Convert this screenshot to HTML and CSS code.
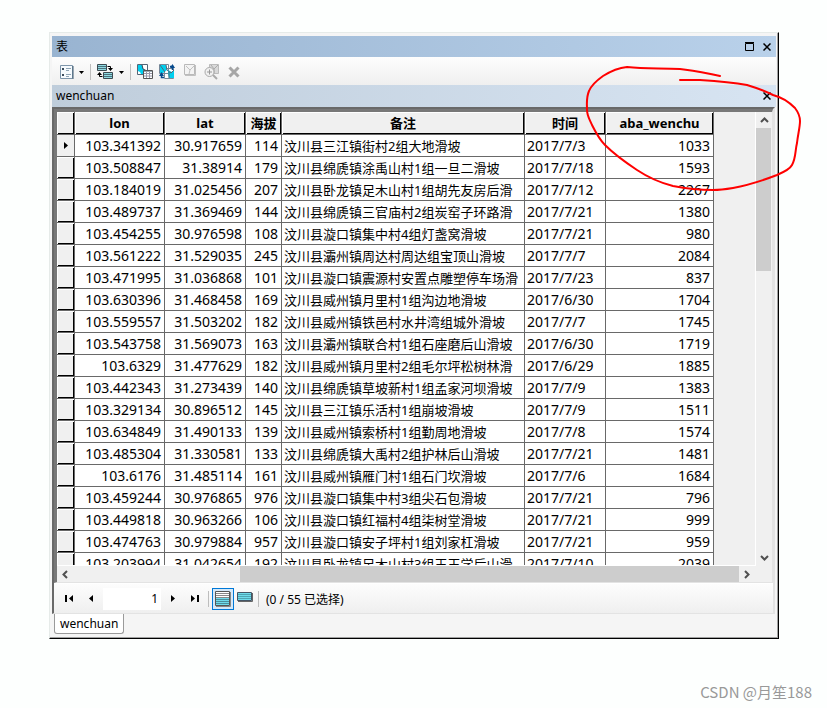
FILE: index.html
```html
<!DOCTYPE html>
<html lang="zh-CN">
<head>
	<meta charset="utf-8">
	<meta name="viewport" content="width=device-width, initial-scale=1">
	<title>表</title>
	<link rel="stylesheet" href="styles.css">
</head>

<body>
	<main class="window">
		<header class="titlebar">
			<h1 class="title">表</h1>
			<button class="win-btn" aria-label="最大化">
				<svg width="10" height="10" viewBox="0 0 10 10"><path d="M.5 1.500h8v7h-8zM0 .5h9" fill="none" stroke="#000"/></svg>
			</button>
			<button class="win-btn" aria-label="关闭">
				<svg width="8" height="8" viewBox="0 0 8 8"><path d="M.5 .5l7 7M7.500 .5l-7 7" stroke="#000" stroke-width="1.500"/></svg>
			</button>
		</header>

		<div class="toolbar">
			<button class="tool" aria-label="表选项">
				<svg width="14" height="14" viewBox="0 0 14 14"><path d="M.5 .5h12v13H.5z" fill="#f6fafd" stroke="#7d95aa"/><path d="M13 1v13" stroke="#3f586e"/><path d="M2 3h2v2H2zM2 9h2v2H2z" fill="#3b4d5c"/><path d="M6 3.500h5M6 5.500h3M6 9.500h5M6 11.500h3" stroke="#8fa5b5"/></svg>
				<svg width="5" height="3" viewBox="0 0 5 3"><path d="M0 0h5L2.500 3z"/></svg>
			</button>
			<span class="sep"></span>
			<button class="tool" aria-label="关联表">
				<svg width="17" height="16" viewBox="0 0 17 16"><path d="M.5 .5h9v6h-9zM6.500 8.500h9v6h-9z" fill="#8edbe2" stroke="#3c4a52"/><path d="M1 2.500h8M1 4.500h8M7 10.500h8M7 12.500h8" stroke="#4c707c"/><path d="M10.500 2.500h3V5M5.500 12.500h-3V10" fill="none" stroke="#000"/><path d="M11 4h5l-2.500 3zM0 11h5l-2.500-3z"/></svg>
				<svg width="5" height="3" viewBox="0 0 5 3"><path d="M0 0h5L2.500 3z"/></svg>
			</button>
			<span class="sep"></span>
			<button class="tool" aria-label="按属性选择">
				<svg width="17" height="16" viewBox="0 0 17 16"><path d="M.5 .5h10v10H.5z" fill="#fff" stroke="#567"/><path d="M1 1h4l1 4 4 2v3H4L3 8 1 7z" fill="#00cfee"/><path d="M5 1l1 4 4 2" fill="none" stroke="#345"/><path d="M6.500 6.500h9v8h-9z" fill="#fff" stroke="#555"/><path d="M7 7h8v1H7z" fill="#9aa8b2"/><path d="M7 9.500h8M7 12h8M9.500 8v6M12.500 8v6" stroke="#99a"/></svg>
			</button>
			<button class="tool" aria-label="切换选择">
				<svg width="17" height="16" viewBox="0 0 17 16"><path d="M.5 .5h9v9h-9zM5.500 4.500h9v10h-9z" fill="#fff" stroke="#789"/><path d="M1 1h6l1 5-4 3H1zM9 6l4 2 2-2v8h-5l-1-4z" fill="#00cfee"/><path d="M7 1l1 5 4 3 3-3M10 8v6M1 1l5 7" fill="none" stroke="#567"/><path d="M13.500 6V2.500H11M2.500 10v3.500H5" fill="none" stroke="#064a8c" stroke-width="1.500"/><path d="M11 4h5l-2.500-4zM0 12h5l-2.500-4z" fill="#064a8c"/></svg>
			</button>
			<button class="tool raised" aria-label="清除选择" disabled>
				<svg width="12" height="12" viewBox="0 0 12 12"><path d="M.5 .5h10v10H.5z" fill="#f3f3f3" stroke="#b9b9b9"/><path d="M2 2l4 4 4-4M6 6l-1 4M11.500 1v10.500H1" fill="none" stroke="#c0c0c0"/></svg>
			</button>
			<button class="tool" aria-label="缩放至所选项" disabled>
				<svg width="16" height="16" viewBox="0 0 16 16"><path d="M5.500 .5h9v9h-9z" fill="#d9d9d9" stroke="#bbb"/><path d="M7 1l3 4 4-4M10 5v4" fill="none" stroke="#aaa"/><circle cx="5.500" cy="8" r="4.500" fill="#f1f1f1" stroke="#aaa"/><path d="M3 8h5M5.500 5.500v5" stroke="#999"/><path d="M9 11l4 4" stroke="#aaa" stroke-width="2"/></svg>
			</button>
			<button class="tool" aria-label="删除所选项" disabled>
				<svg width="12" height="12" viewBox="0 0 12 12"><path d="M1.500 1.500l9 9M10.500 1.500l-9 9" stroke="#a6a6a6" stroke-width="3"/></svg>
			</button>
		</div>

		<div class="caption">
			<h2 class="title">wenchuan</h2>
			<button class="win-btn" aria-label="关闭 wenchuan">
				<svg width="8" height="8" viewBox="0 0 8 8"><path d="M.5 .5l7 7M7.500 .5l-7 7" stroke="#000" stroke-width="1.500"/></svg>
			</button>
		</div>

		<section class="pane">
			<div class="grid">
				<div class="rows">
					<table class="table">
						<colgroup>
							<col class="c-mark"><col class="c-lon"><col class="c-lat"><col class="c-alt"><col class="c-note"><col class="c-date"><col class="c-aba">
						</colgroup>
						<thead>
							<tr><th></th><th>lon</th><th>lat</th><th>海拔</th><th>备注</th><th>时间</th><th>aba_wenchu</th></tr>
						</thead>
						<tbody>
							<tr class="current"><th><svg width="4" height="7" viewBox="0 0 4 7"><path d="M0 0l4 3.500L0 7z"/></svg></th><td>103.341392</td><td>30.917659</td><td>114</td><td>汶川县三江镇街村2组大地滑坡</td><td>2017/7/3</td><td>1033</td></tr>
							<tr><th></th><td>103.508847</td><td>31.38914</td><td>179</td><td>汶川县绵虒镇涂禹山村1组一旦二滑坡</td><td>2017/7/18</td><td>1593</td></tr>
							<tr><th></th><td>103.184019</td><td>31.025456</td><td>207</td><td>汶川县卧龙镇足木山村1组胡先友房后滑</td><td>2017/7/12</td><td>2267</td></tr>
							<tr><th></th><td>103.489737</td><td>31.369469</td><td>144</td><td>汶川县绵虒镇三官庙村2组炭窑子环路滑</td><td>2017/7/21</td><td>1380</td></tr>
							<tr><th></th><td>103.454255</td><td>30.976598</td><td>108</td><td>汶川县漩口镇集中村4组灯盏窝滑坡</td><td>2017/7/21</td><td>980</td></tr>
							<tr><th></th><td>103.561222</td><td>31.529035</td><td>245</td><td>汶川县灞州镇周达村周达组宝顶山滑坡</td><td>2017/7/7</td><td>2084</td></tr>
							<tr><th></th><td>103.471995</td><td>31.036868</td><td>101</td><td>汶川县漩口镇震源村安置点雕塑停车场滑</td><td>2017/7/23</td><td>837</td></tr>
							<tr><th></th><td>103.630396</td><td>31.468458</td><td>169</td><td>汶川县威州镇月里村1组沟边地滑坡</td><td>2017/6/30</td><td>1704</td></tr>
							<tr><th></th><td>103.559557</td><td>31.503202</td><td>182</td><td>汶川县威州镇铁邑村水井湾组城外滑坡</td><td>2017/7/7</td><td>1745</td></tr>
							<tr><th></th><td>103.543758</td><td>31.569073</td><td>163</td><td>汶川县灞州镇联合村1组石座磨后山滑坡</td><td>2017/6/30</td><td>1719</td></tr>
							<tr><th></th><td>103.6329</td><td>31.477629</td><td>182</td><td>汶川县威州镇月里村2组毛尔坪松树林滑</td><td>2017/6/29</td><td>1885</td></tr>
							<tr><th></th><td>103.442343</td><td>31.273439</td><td>140</td><td>汶川县绵虒镇草坡新村1组孟家河坝滑坡</td><td>2017/7/9</td><td>1383</td></tr>
							<tr><th></th><td>103.329134</td><td>30.896512</td><td>145</td><td>汶川县三江镇乐活村1组崩坡滑坡</td><td>2017/7/9</td><td>1511</td></tr>
							<tr><th></th><td>103.634849</td><td>31.490133</td><td>139</td><td>汶川县威州镇索桥村1组勤周地滑坡</td><td>2017/7/8</td><td>1574</td></tr>
							<tr><th></th><td>103.485304</td><td>31.330581</td><td>133</td><td>汶川县绵虒镇大禹村2组护林后山滑坡</td><td>2017/7/21</td><td>1481</td></tr>
							<tr><th></th><td>103.6176</td><td>31.485114</td><td>161</td><td>汶川县威州镇雁门村1组石门坎滑坡</td><td>2017/7/6</td><td>1684</td></tr>
							<tr><th></th><td>103.459244</td><td>30.976865</td><td>976</td><td>汶川县漩口镇集中村3组尖石包滑坡</td><td>2017/7/21</td><td>796</td></tr>
							<tr><th></th><td>103.449818</td><td>30.963266</td><td>106</td><td>汶川县漩口镇红福村4组柒树堂滑坡</td><td>2017/7/21</td><td>999</td></tr>
							<tr><th></th><td>103.474763</td><td>30.979884</td><td>957</td><td>汶川县漩口镇安子坪村1组刘家杠滑坡</td><td>2017/7/21</td><td>959</td></tr>
							<tr><th></th><td>103.203994</td><td>31.042654</td><td>192</td><td>汶川县卧龙镇足木山村3组王玉学后山滑</td><td>2017/7/10</td><td>2039</td></tr>
						</tbody>
					</table>
				</div>
				<div class="vscroll">
					<button class="scroll-btn" aria-label="向上滚动"><svg width="9" height="6" viewBox="0 0 9 6"><path d="M1 5l3.500-3.500L8 5" fill="none" stroke="#505050" stroke-width="2"/></svg></button>
					<div class="track"><div class="thumb"></div></div>
					<button class="scroll-btn" aria-label="向下滚动"><svg width="9" height="6" viewBox="0 0 9 6"><path d="M1 1l3.500 3.500L8 1" fill="none" stroke="#505050" stroke-width="2"/></svg></button>
				</div>
				<div class="hscroll">
					<button class="scroll-btn" aria-label="向左滚动"><svg width="6" height="9" viewBox="0 0 6 9"><path d="M5 1L1.500 4.500 5 8" fill="none" stroke="#505050" stroke-width="2"/></svg></button>
					<div class="track"><div class="thumb"></div></div>
					<button class="scroll-btn" aria-label="向右滚动"><svg width="6" height="9" viewBox="0 0 6 9"><path d="M1 1l3.500 3.500L1 8" fill="none" stroke="#505050" stroke-width="2"/></svg></button>
				</div>
			</div>

			<div class="navbar">
				<button class="nav" aria-label="第一条"><svg width="8" height="7" viewBox="0 0 8 7"><path d="M0 0h2v7H0zM8 0v7L4 3.500z"/></svg></button>
				<button class="nav" aria-label="上一条"><svg width="4" height="7" viewBox="0 0 4 7"><path d="M4 0v7L0 3.500z"/></svg></button>
				<input class="record" type="text" value="1" aria-label="当前记录">
				<button class="nav" aria-label="下一条"><svg width="4" height="7" viewBox="0 0 4 7"><path d="M0 0v7l4-3.500z"/></svg></button>
				<button class="nav" aria-label="最后一条"><svg width="8" height="7" viewBox="0 0 8 7"><path d="M6 0h2v7H6zM0 0v7l4-3.500z"/></svg></button>
				<span class="sep"></span>
				<button class="view active" aria-label="显示所有记录"><svg width="16" height="16" viewBox="0 0 16 16"><path d="M.5 .5h14v14H.5z" fill="#fff" stroke="#555"/><path d="M1 7h13v7H1z" fill="#6fdcec"/><path d="M1 2.500h13M1 4.500h13M1 6.500h13" stroke="#888"/><path d="M1 8.500h13M1 10.500h13M1 12.500h13" stroke="#4a8f9c"/><path d="M15.500 1v14.500H1" fill="none" stroke="#888"/></svg></button>
				<button class="view raised" aria-label="显示所选记录"><svg width="16" height="10" viewBox="0 0 16 10"><path d="M.5 .5h14v8H.5z" fill="#6fdcec" stroke="#456"/><path d="M1 2.500h13M1 4.500h13M1 6.500h13" stroke="#4fa5b2"/><path d="M15.500 1v8.500H1" fill="none" stroke="#666"/></svg></button>
				<span class="sep"></span>
				<span class="status">(0 / 55 已选择)</span>
			</div>
		</section>

		<div class="tabs">
			<button class="tab">wenchuan</button>
		</div>
	</main>

	<footer class="watermark">CSDN @月笙188</footer>

	<!-- hand drawn mark round the aba_wenchu column -->
	<svg class="mark" width="225" height="135" viewBox="580 60 225 135">
		<path d="M720 76C705 73 692 70 680 69C660 68 645 69 627 67C617 68 611 71 603 76C596 81 591 86 589 91C586 98 587 103 587 110C587 116 590 120 592 125C596 133 599 139 605 145C615 155 625 162 637 170C649 178 661 183 673 186C688 189 700 190 713 190C721 190 727 189 733 188C749 185 764 180 777 175C784 172 790 169 792 165C796 158 795 151 797 143C798 134 800 127 800 121C800 116 798 112 795 108C789 102 781 97 773 95C765 91 757 88 747 85C730 82 715 81 700 80L680 80"/>
	</svg>
</body>
</html>
```
FILE: styles.css
```css
* {
	box-sizing: border-box;
}
body {
	margin: 0;
	padding: 32px 48px 0 49px;
	height: 100vh;
	display: flex;
	flex-direction: column;
	position: relative;
	overflow: hidden;
	background: #fdfffe;
	color: #000;
	font-family: "Noto Sans", "Noto Sans CJK SC", sans-serif;
	font-size: 12px;
}
button {
	margin: 0;
	padding: 0;
	border: 0;
	background: none;
	font: inherit;
	color: inherit;
	display: flex;
	align-items: center;
	justify-content: center;
}
svg {
	display: block;
}

.window {
	flex: 1;
	min-height: 0;
	display: flex;
	flex-direction: column;
	padding: 3px 2px 1px 2px;
	background: #f5f5f5;
	border: 1px solid #e6ebe9;
	border-right: 1px solid #000;
	border-bottom: 1px solid #000;
	box-shadow: inset -1px -1px #a0a0a0;
}
.titlebar,
.caption {
	display: flex;
	align-items: center;
	gap: 7px;
	padding: 0 4px;
}
.titlebar {
	height: 21px;
	background: linear-gradient(to right, #99b4d1, #b9d1ea);
}
.caption {
	height: 22px;
	background: linear-gradient(to right, #bfcddb, #d7e4f2);
}
.title {
	flex: 1;
	margin: 0;
	font-size: 12px;
	font-weight: normal;
	line-height: 20px;
}
.win-btn {
	width: 10px;
	height: 16px;
}

.toolbar {
	height: 28px;
	display: flex;
	align-items: center;
	gap: 5px;
	padding: 2px 0 0 8px;
	background: linear-gradient(#fdfdfd, #efefef);
}
.tool {
	height: 20px;
	gap: 5px;
}
.tool:disabled {
	margin-left: 3px;
}
.raised {
	padding-bottom: 4px;
}
.sep {
	width: 1px;
	height: 16px;
	margin: 0 1px;
	background: #bdbdbd;
}

.pane {
	flex: 1;
	min-height: 0;
	display: flex;
	flex-direction: column;
	border-top: 2px solid #696969;
	border-left: 2px solid #696969;
	border-right: 2px solid #e3e3e3;
	border-bottom: 1px solid #e3e3e3;
	margin-right: 1px;
}
.grid {
	flex: 1;
	min-height: 0;
	display: grid;
	grid-template-columns: 1fr 16px;
	grid-template-rows: 1fr 16px;
	border-top: 3px solid #787878;
	border-left: 3px solid #787878;
	border-right: 1px solid #e3e3e3;
	border-bottom: 1px solid #e3e3e3;
	background: #f0f0f0;
}
.rows {
	min-width: 0;
	min-height: 0;
	overflow: hidden;
	border-right: 1px solid #fff;
	border-bottom: 1px solid #fff;
}

.table {
	width: 657px;
	table-layout: fixed;
	border-collapse: separate;
	border-spacing: 0;
	font-size: 14px;
	line-height: 20px;
}
.c-mark { width: 18px; }
.c-lon { width: 90px; }
.c-lat { width: 81px; }
.c-alt { width: 36px; }
.c-note { width: 243px; }
.c-date { width: 81px; }
.c-aba { width: 108px; }
.table th,
.table td {
	height: 22px;
	padding: 0 3px;
	overflow: hidden;
	white-space: nowrap;
	border-right: 1px solid #696969;
	border-bottom: 1px solid #696969;
}
.table td {
	background: #fff;
	text-align: right;
}
.table td:nth-child(5) {
	font-size: 13px;
}
.table td:nth-child(5),
.table td:nth-child(6) {
	padding: 0 2px;
	text-align: left;
}
.table th {
	background: #f0f0f0;
	box-shadow: inset 1px 1px #fff, inset -1px -1px #000;
}
.table thead th {
	height: 23px;
	padding: 0;
	font-size: 13px;
}
.table .current th {
	padding-left: 7px;
	box-shadow: none;
}

.scroll-btn {
	width: 16px;
	height: 16px;
}
.track {
	flex: 1;
	display: flex;
}
.thumb {
	background: #cdcdcd;
}
.vscroll {
	display: flex;
	flex-direction: column;
}
.vscroll .thumb {
	width: 15px;
	height: 34%;
}
.hscroll {
	grid-column: 1 / 3;
	display: flex;
	padding-right: 17px;
}
.hscroll .track {
	justify-content: flex-end;
}
.hscroll .thumb {
	width: 75%;
}

.navbar {
	height: 30px;
	display: flex;
	align-items: center;
	padding-left: 4px;
	border-top: 1px solid #fff;
	background: linear-gradient(#fdfdfd, #efefef);
}
.nav {
	width: 22px;
	height: 22px;
}
.record {
	width: 58px;
	height: 22px;
	margin: 0 1px;
	padding: 0 3px;
	border: 0;
	background: #fff;
	font: inherit;
	text-align: right;
}
.navbar .sep {
	margin: 0 3px 0 2px;
}
.view {
	width: 22px;
	height: 22px;
}
.view.active {
	background: #d5e8f8;
	border: 1px solid #0078d7;
}
.status {
	margin-left: 4px;
	white-space: nowrap;
}

.tabs {
	height: 23px;
	padding: 0 2px;
}
.tab {
	height: 20px;
	padding: 0 5px;
	background: #fff;
	border: 1px solid #9a9a9a;
	border-top: 0;
	border-radius: 0 0 3px 3px;
}

.watermark {
	height: 69px;
	padding-top: 41px;
	margin-right: -33px;
	color: #999;
	font-family: "Noto Sans CJK SC", sans-serif;
	font-size: 15px;
	line-height: 24px;
	text-align: right;
}

.mark {
	position: absolute;
	top: 60px;
	right: 22px;
	pointer-events: none;
}
.mark path {
	fill: none;
	stroke: #f00;
	stroke-width: 2;
	stroke-linecap: round;
}
```
